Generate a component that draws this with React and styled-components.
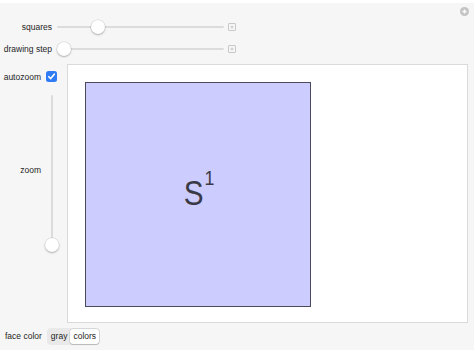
import React from "react";
import styled, { createGlobalStyle } from "styled-components";

const Global = createGlobalStyle`
  html, body { margin: 0; padding: 0; background: #ffffff; }
  body { font-family: "Liberation Sans", Arial, sans-serif; }
`;

const Panel = styled.div`
  position: relative;
  width: 474px;
  height: 347px;
  margin-top: 3px;
  background: #f6f6f6;
  padding-top: 13px;
  box-sizing: border-box;
  display: flex;
  flex-direction: column;
  font-size: 8.5px;
  color: #1e1e1e;
`;

const CornerButton = styled.div`
  position: absolute;
  top: 4px;
  right: 5px;
  width: 9px;
  height: 9px;
  border-radius: 50%;
  background: #c4c4c4;
  display: flex;
  align-items: center;
  justify-content: center;
`;

const ControlRow = styled.div`
  display: flex;
  align-items: center;
  height: 22px;
`;

const Label = styled.div`
  width: ${(p) => p.$w || 52}px;
  text-align: right;
  white-space: nowrap;
  font-size: 8.5px;
  color: #1e1e1e;
`;

const HSlider = styled.div`
  position: relative;
  width: 176px;
  height: 16px;
  margin-left: -2px;
  display: flex;
  align-items: center;
  padding: 0 2px 0 7px;
  box-sizing: border-box;
`;

const HTrack = styled.div`
  flex: 1;
  height: 2px;
  background: #dcdcdc;
  border-radius: 1px;
`;

const Thumb = styled.div`
  position: absolute;
  width: 14px;
  height: 14px;
  border-radius: 50%;
  background: #fff;
  box-shadow: 0 0 0 0.5px rgba(0, 0, 0, 0.12), 0 1px 2px rgba(0, 0, 0, 0.25);
  transform: translate(-50%, -50%);
`;

const PlusBox = styled.div`
  width: 6px;
  height: 6px;
  border: 1px solid #c8c8c8;
  border-radius: 1px;
  margin-left: 2px;
  display: flex;
  align-items: center;
  justify-content: center;
`;

const Main = styled.div`
  display: flex;
  margin-top: 4px;
`;

const LeftCol = styled.div`
  width: 67px;
  display: flex;
  flex-direction: column;
`;

const CheckRow = styled.div`
  display: flex;
  align-items: center;
  height: 24px;
  padding-top: 1px;
  box-sizing: border-box;
`;

const Check = styled.div`
  width: 11px;
  height: 11px;
  border-radius: 2.5px;
  background: #2f7cf6;
  margin-left: 5px;
  display: flex;
  align-items: center;
  justify-content: center;
`;

const VArea = styled.div`
  display: flex;
  align-items: center;
  height: 164px;
`;

const VSlider = styled.div`
  position: relative;
  width: 14px;
  height: 164px;
  margin-left: 4px;
  display: flex;
  justify-content: center;
  padding: 7px 0;
  box-sizing: border-box;
`;

const VTrack = styled.div`
  width: 2px;
  background: #dcdcdc;
  border-radius: 1px;
`;

const Plot = styled.div`
  width: 401px;
  height: 259px;
  background: #fff;
  border: 1px solid #dadada;
  box-sizing: border-box;
  padding: 17px 0 0 17px;
`;

const Square = styled.div`
  width: 226px;
  height: 225px;
  background: #ccccff;
  border: 1px solid #4a4a5a;
  box-sizing: border-box;
  display: flex;
  align-items: center;
  justify-content: center;
  font-family: "Liberation Sans", Arial, sans-serif;
  color: #3a3a46;
`;

const Math = styled.div`
  display: flex;
  align-items: flex-start;
  line-height: 1;
  margin-top: -4px;
  margin-left: 2px;
  transform: scaleX(0.85);
`;

const Base = styled.span`
  font-size: 35px;
`;

const Sup = styled.span`
  font-size: 21px;
  margin-top: -8px;
  margin-left: 1px;
`;

const Bottom = styled.div`
  display: flex;
  align-items: center;
  height: 26px;
  padding-left: 5px;
`;

const Segmented = styled.div`
  display: flex;
  margin-left: 5px;
  background: #e9e9e9;
  border-radius: 4px;
  padding: 1px;
`;

const Seg = styled.div`
  height: 15px;
  padding: 0 3px;
  display: flex;
  align-items: center;
  font-size: 8.5px;
  color: #1e1e1e;
  border-radius: 3px;
  background: ${(p) => (p.$active ? "#fff" : "transparent")};
  box-shadow: ${(p) => (p.$active ? "0 0 0 0.5px rgba(0,0,0,0.15), 0 1px 1px rgba(0,0,0,0.15)" : "none")};
`;

function Slider({ value }) {
  return (
    <HSlider>
      <HTrack />
      <Thumb style={{ left: `${14 + value * 153}px`, top: "50%" }} />
    </HSlider>
  );
}

function Plus() {
  return (
    <PlusBox>
      <svg width="4" height="4" viewBox="0 0 4 4">
        <path d="M2 0.5V3.5M0.5 2H3.5" stroke="#c8c8c8" strokeWidth="1" />
      </svg>
    </PlusBox>
  );
}

export default function App() {
  return (
    <>
      <Global />
      <Panel>
        <CornerButton>
          <svg width="7" height="7" viewBox="0 0 7 7">
            <path d="M3.5 1.5V5.5M1.5 3.5H5.5" stroke="#fff" strokeWidth="1.3" />
          </svg>
        </CornerButton>
        <ControlRow>
          <Label>squares</Label>
          <Slider value={0.22} />
          <Plus />
        </ControlRow>
        <ControlRow>
          <Label>drawing step</Label>
          <Slider value={0} />
          <Plus />
        </ControlRow>
        <Main>
          <LeftCol>
            <CheckRow>
              <Label $w={41}>autozoom</Label>
              <Check>
                <svg width="9" height="9" viewBox="0 0 9 9">
                  <path d="M1.8 4.7L3.7 6.6L7.3 2.2" fill="none" stroke="#fff" strokeWidth="1.6" strokeLinecap="round" strokeLinejoin="round" />
                </svg>
              </Check>
            </CheckRow>
            <VArea>
              <Label $w={41}>zoom</Label>
              <VSlider>
                <VTrack />
                <Thumb style={{ left: "50%", top: "157px" }} />
              </VSlider>
            </VArea>
          </LeftCol>
          <Plot>
            <Square>
              <Math>
                <Base>S</Base>
                <Sup>1</Sup>
              </Math>
            </Square>
          </Plot>
        </Main>
        <Bottom>
          <span>face color</span>
          <Segmented>
            <Seg>gray</Seg>
            <Seg $active>colors</Seg>
          </Segmented>
        </Bottom>
      </Panel>
    </>
  );
}
